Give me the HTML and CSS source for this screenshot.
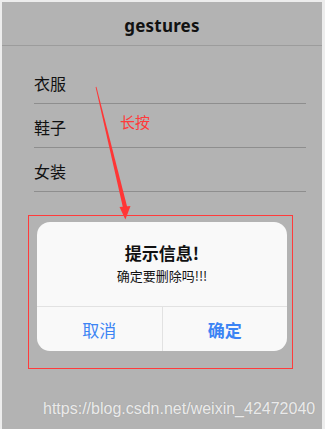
FILE: index.html
```html
<!DOCTYPE html>
<html lang="zh">
<head>
<meta charset="utf-8">
<title>gestures</title>
<link rel="stylesheet" href="styles.css">
</head>
<body>
<div class="screen">
  <header class="bar">gestures</header>
  <ul class="list">
    <li class="row">衣服</li>
    <li class="row">鞋子</li>
    <li class="row">女装</li>
  </ul>

  <div class="note">长按</div>
  <svg class="arrow" width="325" height="429" viewBox="0 0 325 429" aria-hidden="true">
    <polygon points="95.6,87 96.4,86.8 127.6,208.5 123.2,208.8" fill="#ff3636"/>
    <polygon points="119.5,207 130.5,206 125.4,219.5" fill="#ff3636"/>
  </svg>

  <div class="frame"></div>
  <div class="dialog">
    <div class="dialog-body">
      <div class="dialog-title">提示信息!</div>
      <div class="dialog-msg">确定要删除吗!!!</div>
    </div>
    <div class="dialog-actions">
      <div class="btn">取消</div>
      <div class="btn btn-ok">确定</div>
    </div>
  </div>

  <div class="mark">https://blog.csdn.net/weixin_42472040</div>
</div>
</body>
</html>
```
FILE: styles.css
```css
html, body {
  margin: 0;
  padding: 0;
  background: #ededed;
}
body {
  width: 325px;
  height: 429px;
  overflow: hidden;
  font-family: "Noto Sans", "Noto Sans CJK SC", sans-serif;
}
.screen {
  position: relative;
  margin: 2px 3px 0 2px;
  height: 427px;
  background: #b3b3b3;
}
.bar {
  height: 41px;
  padding-top: 2px;
  line-height: 44px;
  text-align: center;
  font-size: 17px;
  font-weight: 700;
  color: #111;
  border-bottom: 1px solid #9c9c9c;
  letter-spacing: 0.2px;
}
.list {
  list-style: none;
  margin: 14px 16px 0 32px;
  padding: 0;
}
.row {
  padding: 13px 0 10px;
  line-height: 20px;
  font-size: 16px;
  color: #111;
  font-family: "Noto Sans CJK SC", sans-serif;
  border-bottom: 1px solid #8e8e8e;
}
.note {
  position: absolute;
  left: 118px;
  top: 110px;
  font-size: 15px;
  line-height: 20px;
  color: #ff3b3b;
  font-family: "Noto Sans CJK SC", sans-serif;
  font-weight: 400;
}
.arrow {
  position: absolute;
  left: -2px;
  top: -2px;
}
.frame {
  position: absolute;
  left: 26px;
  top: 213px;
  width: 263px;
  height: 152px;
  border: 1px solid #ff3b3b;
}
.dialog {
  position: absolute;
  left: 35px;
  top: 220px;
  width: 250px;
  height: 129px;
  background: #f9f9f9;
  border-radius: 13px;
  display: flex;
  flex-direction: column;
  overflow: hidden;
  font-family: "Noto Sans CJK SC", sans-serif;
}
.dialog-body {
  height: 85px;
  display: flex;
  flex-direction: column;
  align-items: center;
  padding-top: 20px;
  box-sizing: border-box;
  border-bottom: 1px solid #e2e2e2;
}
.dialog-title {
  font-size: 17px;
  line-height: 22px;
  font-weight: 700;
  color: #111;
}
.dialog-msg {
  margin-top: 3px;
  font-size: 13px;
  line-height: 18px;
  color: #111;
}
.dialog-actions {
  flex: 1;
  display: flex;
}
.btn {
  flex: 1;
  display: flex;
  align-items: center;
  justify-content: center;
  font-size: 17px;
  color: #3c84f4;
}
.btn + .btn {
  border-left: 1px solid #e2e2e2;
}
.btn-ok {
  font-weight: 700;
}
.mark {
  position: absolute;
  left: 41px;
  top: 397px;
  font-family: "Liberation Sans", Arial, sans-serif;
  font-size: 16px;
  line-height: 20px;
  color: rgba(255, 255, 255, 0.8);
  text-shadow: 0 0 1px rgba(120, 120, 120, 0.4);
  white-space: nowrap;
}
```
